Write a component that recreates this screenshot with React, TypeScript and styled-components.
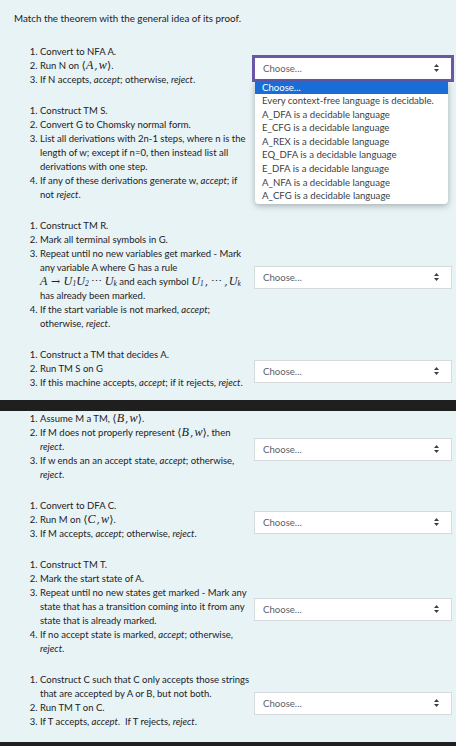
import React from 'react';
import styled, { createGlobalStyle } from 'styled-components';

const GlobalStyle = createGlobalStyle`
  html, body {
    margin: 0;
    padding: 0;
    background: #e7f3f5;
  }
  body {
    font-family: Lato, "Open Sans", sans-serif;
    font-size: 9.5px;
    color: #1d2125;
  }
`;

const SPage = styled.div`
  width: 456px;
  height: 746px;
  overflow: hidden;
  background: #e7f3f5;
  display: flex;
  flex-direction: column;
`;

const SQuestion = styled.div`
  padding: 10.5px 4px 8px 14px;
  line-height: 14px;
  font-size: 9.8px;
`;

const SRow = styled.div<{ $top?: number }>`
  display: grid;
  grid-template-columns: 238px 198px;
  column-gap: 2px;
  align-items: center;
  padding: ${(p) => (p.$top ?? 12)}px 4px 0 14px;
`;

const SList = styled.ol`
  margin: 0 0 5px 0;
  padding-left: 26px;
  line-height: 14px;

  em {
    font-style: italic;
  }
`;

const SDivider = styled.div<{ $top: number; $height: number }>`
  margin-top: ${(p) => p.$top}px;
  height: ${(p) => p.$height}px;
  flex-shrink: 0;
  background: #1f1f1f;
`;

const SMath = styled.span`
  font-family: "Liberation Serif", "DejaVu Serif", serif;
  font-style: italic;
  font-size: 1.28em;
  line-height: 0;
  white-space: nowrap;
  sub {
    font-size: 0.62em;
    line-height: 0;
    position: relative;
    top: 0.15em;
    vertical-align: baseline;
  }
`;

const SUpright = styled.span<{ $space?: number }>`
  font-style: normal;
  font-family: "DejaVu Serif", "Liberation Serif", serif;
  font-size: 0.9em;
  margin: 0 ${(p) => p.$space ?? 0}px;
`;

const SSelectWrap = styled.div`
  position: relative;
`;

const SSelect = styled.div<{ $focused?: boolean }>`
  height: 23px;
  box-sizing: border-box;
  display: flex;
  align-items: center;
  justify-content: space-between;
  padding: 0 12px 0 8px;
  background: #fff;
  border: 1px solid ${(p) => (p.$focused ? '#6a58a7' : '#d6dadd')};
  box-shadow: ${(p) => (p.$focused ? '0 0 0 2px #6a58a7' : 'none')};
  color: #5b6168;
  font-size: 9.6px;
`;

const SMenu = styled.ul`
  position: absolute;
  top: calc(100% + 1px);
  left: 1px;
  width: 193px;
  margin: 0;
  padding: 0 0 1px 0;
  list-style: none;
  background: #fff;
  border-radius: 0 0 4px 4px;
  box-shadow: 0 2px 6px rgba(0, 0, 0, 0.28);
  z-index: 2;
`;

const SOption = styled.li<{ $active?: boolean }>`
  height: 13.6px;
  line-height: 13.6px;
  padding-left: 7px;
  font-size: 9.6px;
  white-space: nowrap;
  color: ${(p) => (p.$active ? '#fff' : '#3a3f44')};
  background: ${(p) => (p.$active ? '#1a6dd6' : 'transparent')};
`;

const Caret = () => (
  <svg width="5" height="8" viewBox="0 0 5 8">
    <path d="M2.5 0 L5 3 L0 3 Z" fill="#3c4046" />
    <path d="M2.5 8 L5 5 L0 5 Z" fill="#3c4046" />
  </svg>
);

const options = [
  'Choose...',
  'Every context-free language is decidable.',
  'A_DFA is a decidable language',
  'E_CFG is a decidable language',
  'A_REX is a decidable language',
  'EQ_DFA is a decidable language',
  'E_DFA is a decidable language',
  'A_NFA is a decidable language',
  'A_CFG is a decidable language',
];

const Pair = ({ a, b }: { a: string; b: string }) => (
  <SMath>
    <SUpright>⟨</SUpright>
    {a}
    <SUpright $space={1}>,</SUpright>
    {b}
    <SUpright>⟩</SUpright>
  </SMath>
);

const Choice = ({ open }: { open?: boolean }) => (
  <SSelectWrap>
    <SSelect $focused={open}>
      <span>Choose...</span>
      <Caret />
    </SSelect>
    {open && (
      <SMenu>
        {options.map((o, i) => (
          <SOption key={o} $active={i === 0}>
            {o}
          </SOption>
        ))}
      </SMenu>
    )}
  </SSelectWrap>
);

interface Item {
  steps: React.ReactNode[];
  open?: boolean;
  top?: number;
  hideSelect?: boolean;
}

const items: Item[] = [
  {
    open: true,
    steps: [
      'Convert to NFA A.',
      <>Run N on <Pair a="A" b="w" />.</>,
      <>If N accepts, <em>accept</em>; otherwise, <em>reject</em>.</>,
    ],
  },
  {
    hideSelect: true,
    steps: [
      'Construct TM S.',
      'Convert G to Chomsky normal form.',
      'List all derivations with 2n-1 steps, where n is the length of w; except if n=0, then instead list all derivations with one step.',
      <>If any of these derivations generate w, <em>accept</em>; if not <em>reject</em>.</>,
    ],
  },
  {
    steps: [
      'Construct TM R.',
      'Mark all terminal symbols in G.',
      <>
        Repeat until no new variables get marked - Mark any variable A where G has a rule
        <br />
        <SMath>
          A<SUpright $space={3.5}>→</SUpright>U<sub>1</sub>U<sub>2</sub>
          <SUpright $space={2.5}>⋯</SUpright>U<sub>k</sub>
        </SMath>{' '}
        and each symbol{' '}
        <SMath>
          U<sub>1</sub>
          <SUpright $space={1}>,</SUpright>
          <SUpright $space={1.5}>⋯</SUpright>
          <SUpright $space={1}>,</SUpright>U<sub>k</sub>
        </SMath>{' '}
        has already been marked.
      </>,
      <>If the start variable is not marked, <em>accept</em>; otherwise, <em>reject</em>.</>,
    ],
  },
  {
    steps: [
      'Construct a TM that decides A.',
      'Run TM S on G',
      <>If this machine accepts, <em>accept</em>; if it rejects, <em>reject</em>.</>,
    ],
  },
  {
    top: 1,
    steps: [
      <>Assume M a TM, <Pair a="B" b="w" />.</>,
      <>If M does not properly represent <Pair a="B" b="w" />, then <em>reject</em>.</>,
      <>If w ends an an accept state, <em>accept</em>; otherwise, <em>reject</em>.</>,
    ],
  },
  {
    steps: [
      'Convert to DFA C.',
      <>Run M on <Pair a="C" b="w" />.</>,
      <>If M accepts, <em>accept</em>; otherwise, <em>reject</em>.</>,
    ],
  },
  {
    steps: [
      'Construct TM T.',
      'Mark the start state of A.',
      'Repeat until no new states get marked - Mark any state that has a transition coming into it from any state that is already marked.',
      <>If no accept state is marked, <em>accept</em>; otherwise, <em>reject</em>.</>,
    ],
  },
  {
    steps: [
      'Construct C such that C only accepts those strings that are accepted by A or B, but not both.',
      'Run TM T on C.',
      <>If T accepts, <em>accept</em>.&nbsp; If T rejects, <em>reject</em>.</>,
    ],
  },
];

const Row = ({ item }: { item: Item }) => (
  <SRow $top={item.top}>
    <SList>
      {item.steps.map((s, i) => (
        <li key={i}>{s}</li>
      ))}
    </SList>
    {item.hideSelect ? <div /> : <Choice open={item.open} />}
  </SRow>
);

const App = () => (
  <>
    <GlobalStyle />
    <SPage>
      <SQuestion>Match the theorem with the general idea of its proof.</SQuestion>
      {items.slice(0, 4).map((it, i) => (
        <Row key={i} item={it} />
      ))}
      <SDivider $top={5} $height={11} />
      {items.slice(4).map((it, i) => (
        <Row key={i + 4} item={it} />
      ))}
      <SDivider $top={8} $height={10} />
    </SPage>
  </>
);

export default App;
